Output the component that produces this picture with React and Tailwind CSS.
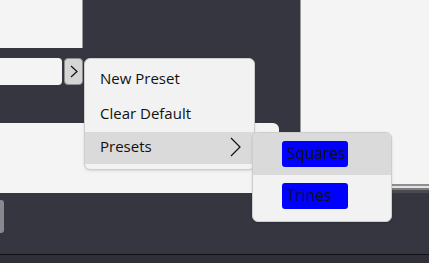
import React from 'react';

// Thin chevron used in the input button and the "Presets" row
const Chevron = ({ w, h, className }) => (
  <svg width={w} height={h} viewBox={`0 0 ${w} ${h}`} className={className} fill="none">
    <polyline
      points={`1,1 ${w - 1},${h / 2} 1,${h - 1}`}
      stroke="#111"
      strokeWidth="1.2"
      strokeLinejoin="miter"
    />
  </svg>
);

const menuItems = ['New Preset', 'Clear Default', 'Presets'];
const presets = ['Squares', 'Trines'];

export default function App() {
  return (
    <div
      className="relative w-[429px] h-[263px] overflow-hidden bg-[#363640] text-[#111]"
      style={{ fontFamily: '"Open Sans", "Noto Sans", sans-serif' }}
    >
      {/* Page underneath */}
      <div className="flex h-[193px]">
        <div className="flex w-[300px] flex-col">
          <div className="h-[123px]">
            <div className="h-[48px] w-[83px] border-r border-[#9a9a9a] bg-[#f4f4f4]" />
            <div className="mt-[10px] flex h-[27px] items-stretch gap-[2px]">
              <div className="w-[62px] rounded-r-[4px] bg-[#f4f4f4]" />
              <div className="flex w-[19px] items-center justify-center rounded-[4px] border border-[#8e8e8e] bg-[#d5d5d5]">
                <Chevron w={8} h={13} />
              </div>
            </div>
          </div>
          <div className="h-[70px] w-[279px] rounded-tr-[6px] bg-[#f4f4f4]" />
        </div>
        <div className="flex flex-1 flex-col justify-end border-l border-[#9a9a9a] bg-[#f4f4f4]">
          <div className="h-[2px] bg-[#8e8e8e]" />
          <div className="h-[2px] bg-[#e2e2e2]" />
          <div className="h-[2px] bg-[#7c7c7c]" />
          <div className="h-[3px] bg-[#4a4a52]" />
        </div>
      </div>

      {/* Bottom dark bar */}
      <div className="relative h-[70px]">
        <div className="absolute left-0 top-[7px] h-[33px] w-[4px] rounded-r-[3px] bg-[#88888f]" />
        <div className="absolute left-0 right-0 top-[61px] h-px bg-[#111116]" />
        <div className="absolute bottom-0 left-0 right-0 h-[8px] bg-[#303039]" />
      </div>

      {/* Context menu */}
      <div className="absolute left-[84px] top-[58px] flex h-[112px] w-[171px] flex-col gap-[3px] rounded-[6px] border border-[#cdcdcd] bg-[#f2f2f2] pt-[3px] shadow-sm">
        {menuItems.map((label, i) => (
          <div
            key={label}
            className={`flex h-[32px] items-center justify-between pl-[15px] pr-[13px] text-[15px] leading-none ${
              i === 2 ? 'bg-[#dadada]' : ''
            }`}
          >
            <span className={i === 2 ? 'pb-[3px]' : 'pt-[1px]'}>{label}</span>
            {i === 2 && <Chevron w={11} h={20} className="mb-[2px]" />}
          </div>
        ))}
      </div>

      {/* Presets submenu */}
      <div className="absolute left-[252px] top-[132px] flex h-[90px] w-[140px] flex-col rounded-[6px] border border-[#cdcdcd] bg-[#f2f2f2] shadow-sm">
        {presets.map((name, i) => (
          <div
            key={name}
            className={`flex h-[42px] items-center pl-[29px] ${i === 0 ? 'rounded-t-[5px] bg-[#dadada]' : ''}`}
          >
            <div className="flex h-[26px] w-[66px] items-center rounded-[3px] bg-[#0000ff] px-[5px] text-[15.5px] leading-none">
              {name}
            </div>
          </div>
        ))}
      </div>
    </div>
  );
}
